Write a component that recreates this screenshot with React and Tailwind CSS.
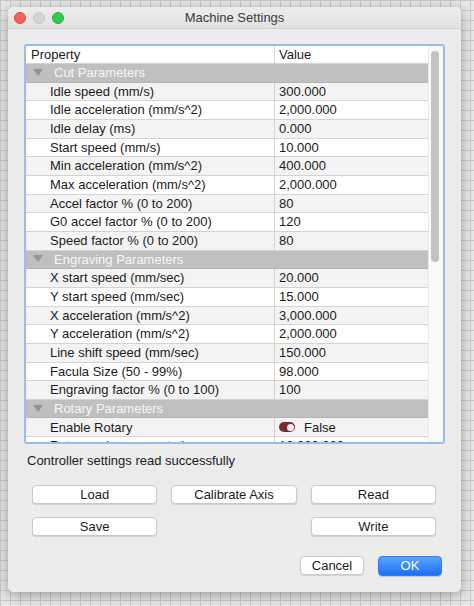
import React from "react";

const groups = [
  {
    name: "Cut Parameters",
    rows: [
      ["Idle speed (mm/s)", "300.000"],
      ["Idle acceleration (mm/s^2)", "2,000.000"],
      ["Idle delay (ms)", "0.000"],
      ["Start speed (mm/s)", "10.000"],
      ["Min acceleration (mm/s^2)", "400.000"],
      ["Max acceleration (mm/s^2)", "2,000.000"],
      ["Accel factor % (0 to 200)", "80"],
      ["G0 accel factor % (0 to 200)", "120"],
      ["Speed factor % (0 to 200)", "80"],
    ],
  },
  {
    name: "Engraving Parameters",
    rows: [
      ["X start speed (mm/sec)", "20.000"],
      ["Y start speed (mm/sec)", "15.000"],
      ["X acceleration (mm/s^2)", "3,000.000"],
      ["Y acceleration (mm/s^2)", "2,000.000"],
      ["Line shift speed (mm/sec)", "150.000"],
      ["Facula Size (50 - 99%)", "98.000"],
      ["Engraving factor % (0 to 100)", "100"],
    ],
  },
  {
    name: "Rotary Parameters",
    rows: [
      ["Enable Rotary", "toggle"],
      ["Rotary pulses per rotation", "10,000.000"],
    ],
  },
];

function Toggle() {
  return (
    <span className="mr-[9px] flex h-[10px] w-[16px] items-center justify-end rounded-full bg-[#7a2a34] pr-[1.5px]">
      <span className="h-[7px] w-[7px] rounded-full bg-[#f4f0f0]" />
    </span>
  );
}

function GroupRow({ name }) {
  return (
    <div className="flex h-[18.67px] shrink-0 items-center border-b border-[#b4b4b4] bg-[#bfbfbf] text-[#f7f7f7]">
      <svg width="10" height="8" viewBox="0 0 10 8" className="ml-[7px] mr-[11px]">
        <polygon points="0,0 10,0 5,7" fill="#949494" />
      </svg>
      {name}
    </div>
  );
}

function DataRow({ label, value, odd }) {
  return (
    <div
      className={`flex h-[18.67px] shrink-0 items-center border-b border-[#d3d3d3] ${
        odd ? "bg-[#f3f3f3]" : "bg-white"
      }`}
    >
      <div className="flex h-full w-[249px] items-center border-r border-[#d3d3d3] pl-[24px]">
        {label}
      </div>
      <div className="flex h-full flex-1 items-center pl-[4px]">
        {value === "toggle" ? (
          <>
            <Toggle />
            False
          </>
        ) : (
          value
        )}
      </div>
    </div>
  );
}

function Button({ children, className = "" }) {
  return (
    <button
      className={`flex h-[19px] items-center justify-center rounded-[4px] border border-[#c9c9c9] bg-white text-[13px] text-[#1b1b1b] shadow-[0_1px_1px_rgba(0,0,0,0.12)] ${className}`}
    >
      {children}
    </button>
  );
}

export default function App() {
  return (
    <div
      className="h-[606px] w-[474px] overflow-hidden bg-[#e8e8e8] bg-[linear-gradient(to_right,#c9c9c9_1px,transparent_1px),linear-gradient(to_bottom,#c9c9c9_1px,transparent_1px)] bg-[size:10px_10px] pl-[8px] pt-[7px]"
      style={{ fontFamily: '"Liberation Sans", Arial, sans-serif' }}
    >
      <div className="flex h-[585px] w-[453px] flex-col rounded-[5px] bg-[#ececec] text-[13px] text-[#1b1b1b] shadow-[0_3px_14px_rgba(0,0,0,0.35)]">
        {/* title bar */}
        <div className="grid h-[22px] shrink-0 grid-cols-[1fr_auto_1fr] items-center rounded-t-[5px] border-b border-[#d2d2d2] bg-[linear-gradient(to_bottom,#ececec,#e2e2e2)]">
          <div className="flex items-center gap-[7px] pl-[6px]">
            <span className="h-[12px] w-[12px] rounded-full border border-[#e2463f] bg-[#fc605c]" />
            <span className="h-[12px] w-[12px] rounded-full border border-[#c9c9c9] bg-[#d3d3d3]" />
            <span className="h-[12px] w-[12px] rounded-full border border-[#2aac3c] bg-[#34c84a]" />
          </div>
          <div className="text-[13px] text-[#3b3b3b]">Machine Settings</div>
          <div />
        </div>

        {/* property table */}
        <div className="ml-[16px] mt-[15px] flex h-[400px] w-[421px] shrink-0 overflow-hidden rounded-[3px] border-2 border-[#97bdee] bg-white">
          <div className="flex w-[402px] flex-col overflow-hidden">
            <div className="flex h-[18px] shrink-0 items-center border-b border-[#d3d3d3] bg-white">
              <div className="flex h-full w-[249px] items-center border-r border-[#dcdcdc] pl-[5px]">
                Property
              </div>
              <div className="pl-[4px]">Value</div>
            </div>
            {groups.map((g) => (
              <React.Fragment key={g.name}>
                <GroupRow name={g.name} />
                {g.rows.map((r, i) => (
                  <DataRow key={r[0]} label={r[0]} value={r[1]} odd={i % 2 === 0} />
                ))}
              </React.Fragment>
            ))}
          </div>
          <div className="flex-1 border-l border-[#ebebeb] bg-[#fafafa] pl-[2px] pt-[5px]">
            <div className="h-[211px] w-[8px] rounded-full bg-[#c2c2c2]" />
          </div>
        </div>

        <div className="ml-[19px] mt-[9px] leading-[16px]">Controller settings read successfully</div>

        <div className="ml-[24px] mt-[16px] grid w-[404px] grid-cols-3 gap-x-[14px] gap-y-[13px]">
          <Button>Load</Button>
          <Button>Calibrate Axis</Button>
          <Button>Read</Button>
          <Button>Save</Button>
          <div />
          <Button>Write</Button>
        </div>

        <div className="mr-[19px] mt-[20px] flex justify-end gap-[14px]">
          <Button className="w-[64px]">Cancel</Button>
          <button className="flex h-[20px] w-[64px] items-center justify-center rounded-[4px] border border-[#2f7df4] bg-[linear-gradient(to_bottom,#5aa6fd,#1a6ff3)] text-[13px] text-white shadow-[0_1px_1px_rgba(0,0,0,0.15)]">
            OK
          </button>
        </div>
      </div>
    </div>
  );
}
